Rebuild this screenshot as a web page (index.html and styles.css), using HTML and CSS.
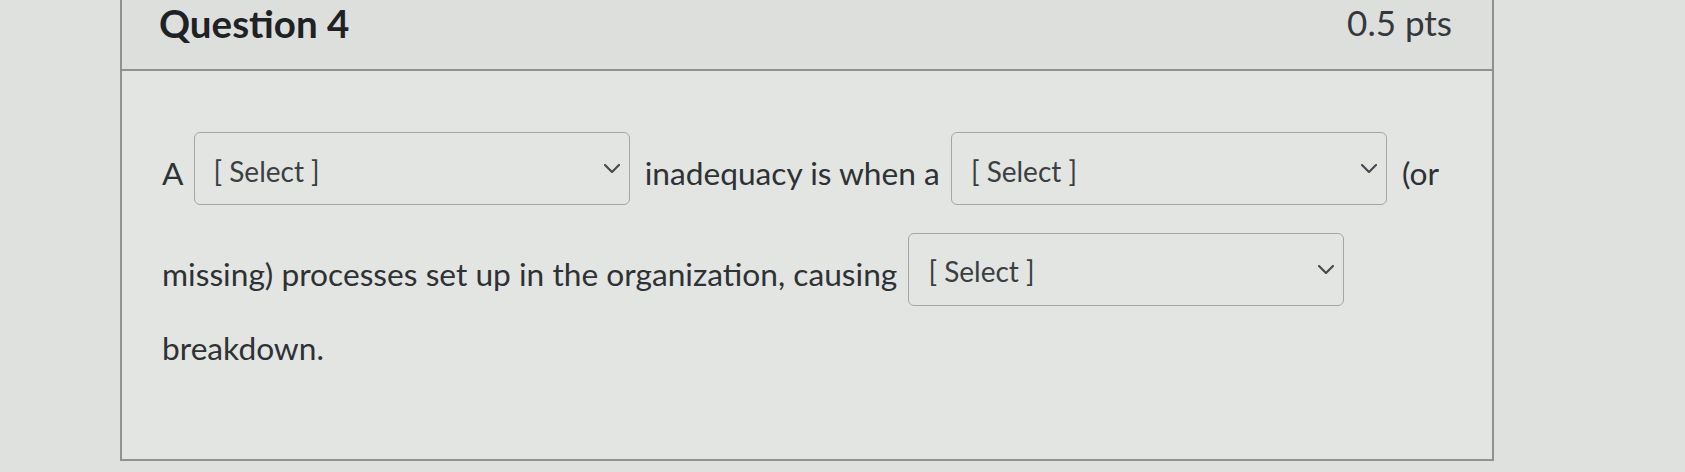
FILE: index.html
```html
<!DOCTYPE html>
<html lang="en">
<head>
<meta charset="utf-8">
<title>Question 4</title>
<link rel="stylesheet" href="styles.css">
</head>
<body>
<div class="page">
  <div class="question">
    <div class="q-header">
      <span class="q-name">Question 4</span>
      <span class="q-points">0.5 pts</span>
    </div>
    <div class="q-body">
      <p class="q-text"><span class="word">A</span> <span class="select"><span class="select-label">[ Select ]</span><svg class="chev" width="16" height="9" viewBox="0 0 16 9"><polyline points="1,1 8,8 15,1" fill="none" stroke="#474b4f" stroke-width="2.2" stroke-linecap="round" stroke-linejoin="round"/></svg></span> <span class="word">inadequacy is when a</span> <span class="select"><span class="select-label">[ Select ]</span><svg class="chev" width="16" height="9" viewBox="0 0 16 9"><polyline points="1,1 8,8 15,1" fill="none" stroke="#474b4f" stroke-width="2.2" stroke-linecap="round" stroke-linejoin="round"/></svg></span> <span class="word">(or missing) processes set up in the organization, causing</span> <span class="select"><span class="select-label">[ Select ]</span><svg class="chev" width="16" height="9" viewBox="0 0 16 9"><polyline points="1,1 8,8 15,1" fill="none" stroke="#474b4f" stroke-width="2.2" stroke-linecap="round" stroke-linejoin="round"/></svg></span> <span class="word">breakdown.</span></p>
    </div>
  </div>
</div>
</body>
</html>
```

FILE: styles.css
```css
html, body {
  margin: 0;
  padding: 0;
  background: #dfe1de;
}

body {
  font-family: Lato, "Open Sans", "Liberation Sans", sans-serif;
  color: #2d3134;
  height: 472px;
  overflow: hidden;
}

.page {
  padding-left: 120px;
}

.question {
  width: 1374px;
  border: 2px solid #8e9291;
  border-top: none;
  background: #e3e5e2;
  box-sizing: border-box;
}

.q-header {
  height: 71px;
  box-sizing: border-box;
  border-bottom: 2px solid #8e9291;
  background: #dddfdc;
  display: flex;
  justify-content: space-between;
  align-items: flex-start;
  padding: 0 40px 0 37px;
}

.q-name {
  font-size: 38.5px;
  font-weight: 700;
  color: #1f2225;
  line-height: 1;
  margin-top: 4px;
}

.q-points {
  font-size: 35px;
  font-weight: 400;
  color: #34383b;
  line-height: 1;
  margin-top: 5px;
}

.q-body {
  padding: 39px 30px 73px 40px;
}

.q-text {
  margin: 0;
  font-size: 31.7px;
  line-height: 75px;
  color: #2e3235;
}

.word {
  line-height: 40px;
}

.select {
  display: inline-flex;
  align-items: center;
  justify-content: space-between;
  box-sizing: border-box;
  width: 436px;
  height: 73px;
  border: 1.5px solid #a4a7a6;
  border-radius: 6px;
  margin: 22px 7px 0 3px;
  padding: 0 9px 0 19px;
  vertical-align: 3px;
  line-height: 30px;
}

.select-label {
  font-size: 28px;
  color: #3b3f42;
  padding-top: 4px;
}

.chev {
  display: block;
  flex: none;
}
```
